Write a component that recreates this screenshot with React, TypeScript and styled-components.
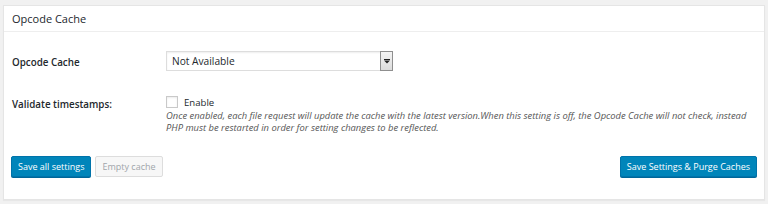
import React from 'react';
import styled, { createGlobalStyle } from 'styled-components';

const GlobalStyle = createGlobalStyle`
  html, body { margin: 0; padding: 0; background: #f1f1f1; }
  body { font-family: "Open Sans", "Noto Sans", sans-serif; color: #23282d; }
`;

const Page = styled.div`
  padding: 5px 3px 4px 3px;
`;

const Panel = styled.div`
  background: #fff;
  border: 1px solid #e5e5e5;
  box-shadow: 0 1px 1px rgba(0, 0, 0, 0.04);
`;

const PanelHeader = styled.h2`
  margin: 0;
  height: 25px;
  line-height: 25px;
  padding: 0 8px;
  font-size: 11px;
  font-weight: 400;
  border-bottom: 1px solid #eee;
`;

const PanelBody = styled.div`
  padding: 19px 7px 22px 7px;
`;

const FormRow = styled.div<{ $gap?: number }>`
  display: grid;
  grid-template-columns: 155px 1fr;
  align-items: start;
  margin-bottom: ${(p) => p.$gap ?? 0}px;
`;

const Label = styled.label<{ $offset?: number }>`
  font-size: 9.8px;
  font-weight: 600;
  line-height: 19px;
  padding-left: 1px;
  padding-top: ${(p) => p.$offset ?? 0}px;
`;

const SelectBox = styled.div`
  width: 225px;
  height: 18px;
  border: 1px solid #ddd;
  box-shadow: inset 0 1px 2px rgba(0, 0, 0, 0.07);
  display: flex;
  align-items: stretch;
  font-size: 10.2px;
  background: #fff;
`;

const SelectValue = styled.span`
  flex: 1;
  padding-left: 5px;
  line-height: 18px;
`;

const SelectArrow = styled.span`
  width: 11px;
  border: 1px solid #8f8f8f;
  background: linear-gradient(#f4f4f4, #dcdcdc);
  display: flex;
  align-items: center;
  justify-content: center;
  margin: -1px -1px -1px 0;
`;

const CheckLine = styled.div`
  display: flex;
  align-items: center;
  gap: 6px;
  font-size: 9.6px;
  height: 14px;
`;

const CheckBox = styled.span`
  width: 10px;
  height: 10px;
  border: 1px solid #c9c9c9;
  box-shadow: inset 0 1px 2px rgba(0, 0, 0, 0.08);
  background: #fff;
`;

const Description = styled.p`
  margin: 1px 0 0;
  font-size: 9.4px;
  font-style: italic;
  color: #555;
  line-height: 12px;
`;

const Actions = styled.div`
  display: flex;
  align-items: center;
  gap: 4px;
  margin-top: 22px;
`;

const Button = styled.button<{ $primary?: boolean }>`
  height: 21px;
  padding: 0 6px;
  font-family: inherit;
  font-size: 9px;
  border-radius: 2px;
  border: 1px solid ${(p) => (p.$primary ? '#0073aa' : '#ddd')};
  background: ${(p) => (p.$primary ? '#0085ba' : '#f7f7f7')};
  color: ${(p) => (p.$primary ? '#fff' : '#a0a5aa')};
  box-shadow: ${(p) => (p.$primary ? '0 1px 0 #006799' : 'none')};
  cursor: pointer;
`;

const Spacer = styled.span`
  flex: 1;
`;

export default function App() {
  return (
    <Page>
      <GlobalStyle />
      <Panel>
        <PanelHeader>Opcode Cache</PanelHeader>
        <PanelBody>
          <FormRow $gap={23}>
            <Label $offset={2}>Opcode Cache</Label>
            <SelectBox>
              <SelectValue>Not Available</SelectValue>
              <SelectArrow>
                <svg width="6" height="5" viewBox="0 0 6 5">
                  <rect x="0" y="0" width="6" height="1" fill="#222" />
                  <path d="M0 1.5H6L3 4.5Z" fill="#222" />
                </svg>
              </SelectArrow>
            </SelectBox>
          </FormRow>
          <FormRow>
            <Label>Validate timestamps:</Label>
            <div>
              <CheckLine>
                <CheckBox />
                Enable
              </CheckLine>
              <Description>
                Once enabled, each file request will update the cache with the latest version.When this setting is off, the Opcode Cache will not check, instead PHP must be restarted in order for setting changes to be reflected.
              </Description>
            </div>
          </FormRow>
          <Actions>
            <Button $primary>Save all settings</Button>
            <Button disabled>Empty cache</Button>
            <Spacer />
            <Button $primary>Save Settings &amp; Purge Caches</Button>
          </Actions>
        </PanelBody>
      </Panel>
    </Page>
  );
}
